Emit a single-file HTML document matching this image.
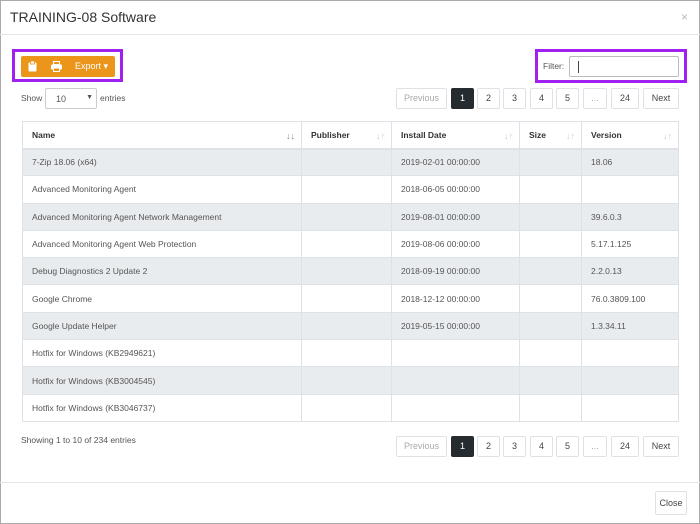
<!DOCTYPE html>
<html><head><style>
*{box-sizing:border-box;margin:0;padding:0}
body{width:700px;height:524px;background:#fff;font-family:"Liberation Sans",sans-serif;color:#555;position:relative;overflow:hidden}
.a{position:absolute}
.frame{left:0;top:0;width:700px;height:524px;border:1px solid #aaa}
.title{left:10px;top:9px;font-size:14px;color:#333}
.x{right:12px;top:10px;font-size:12px;color:#bbb}
.hr{left:0;width:700px;height:1px;background:#e5e5e5}
.pb{border:3px solid #a020f0}
.btn{left:21px;top:56px;width:94px;height:21px;background:#ec951b;border-radius:2px;color:#fff;font-size:9px}
.pg{height:21px;border:1px solid #dee2e6;border-radius:2px;font-size:9px;color:#444;text-align:center;line-height:19px;top:88px}
.pg.d{color:#aaa}
.pg.on{background:#262b30;color:#fff;border-color:#262b30}
table{position:absolute;left:22px;top:121px;width:657px;border-collapse:collapse;font-size:8.5px;color:#555;border:1px solid #dee2e6}
th{height:27px;text-align:left;font-weight:bold;color:#333;padding-left:9px;border-left:1px solid #dee2e6;border-bottom:2px solid #dee2e6;position:relative}
th span{position:absolute;right:6px;top:9px;color:#ccc;font-size:9px;font-weight:normal}
td{height:27.3px;padding-left:9px;border-left:1px solid #dee2e6;border-top:1px solid #dee2e6}
tr.s td{background:#e9ecef}
</style></head><body>
<div class="a frame"></div>
<div class="a title">TRAINING-08 Software</div>
<div class="a x">×</div>
<div class="a hr" style="top:34px"></div>
<div class="a pb" style="left:12px;top:49px;width:111px;height:33px"></div>
<div class="a btn">
<svg class="a" style="left:7px;top:5px" width="9" height="11"><rect x="0.5" y="1.5" width="8" height="9" rx="1" fill="#fff"/><rect x="2.5" y="0" width="4" height="3" fill="#fff" stroke="#ec951b" stroke-width=".8"/></svg>
<svg class="a" style="left:30px;top:5px" width="11" height="11"><rect x="2.5" y="0.5" width="6" height="3" fill="none" stroke="#fff"/><rect x="0" y="3.5" width="11" height="5" rx="1" fill="#fff"/><rect x="2.5" y="7" width="6" height="3.5" fill="#ec951b" stroke="#fff"/></svg>
<span class="a" style="left:54px;top:5px">Export ▾</span></div>
<div class="a pb" style="left:535px;top:49px;width:152px;height:34px"></div>
<div class="a" style="left:543px;top:61px;font-size:8.5px">Filter:</div>
<div class="a" style="left:569px;top:56px;width:110px;height:21px;border:1px solid #bbb;border-radius:2px"><div class="a" style="left:8px;top:4px;width:1px;height:12px;background:#444"></div></div>
<div class="a" style="left:21px;top:93px;font-size:8.5px">Show</div>
<div class="a" style="left:45px;top:88px;width:52px;height:21px;border:1px solid #ccc;border-radius:2px;font-size:9px;padding:5px 0 0 10px">10<span class="a" style="right:3px;top:5px;font-size:7px">▼</span></div>
<div class="a" style="left:100px;top:93px;font-size:8.5px">entries</div>
<div class="a pg d" style="left:396px;width:51px">Previous</div>
<div class="a pg on" style="left:451px;width:23px">1</div>
<div class="a pg" style="left:477px;width:23px">2</div>
<div class="a pg" style="left:503px;width:23px">3</div>
<div class="a pg" style="left:530px;width:23px">4</div>
<div class="a pg" style="left:556px;width:23px">5</div>
<div class="a pg d" style="left:583px;width:24px">...</div>
<div class="a pg" style="left:611px;width:28px">24</div>
<div class="a pg" style="left:643px;width:36px">Next</div>
<table>
<tr><th style="width:279px">Name<span style="color:#888">↓↓</span></th><th style="width:90px">Publisher<span>↓↑</span></th><th style="width:128px">Install Date<span>↓↑</span></th><th style="width:62px">Size<span>↓↑</span></th><th>Version<span>↓↑</span></th></tr>
<tr class="s"><td>7-Zip 18.06 (x64)</td><td></td><td>2019-02-01 00:00:00</td><td></td><td>18.06</td></tr>
<tr><td>Advanced Monitoring Agent</td><td></td><td>2018-06-05 00:00:00</td><td></td><td></td></tr>
<tr class="s"><td>Advanced Monitoring Agent Network Management</td><td></td><td>2019-08-01 00:00:00</td><td></td><td>39.6.0.3</td></tr>
<tr><td>Advanced Monitoring Agent Web Protection</td><td></td><td>2019-08-06 00:00:00</td><td></td><td>5.17.1.125</td></tr>
<tr class="s"><td>Debug Diagnostics 2 Update 2</td><td></td><td>2018-09-19 00:00:00</td><td></td><td>2.2.0.13</td></tr>
<tr><td>Google Chrome</td><td></td><td>2018-12-12 00:00:00</td><td></td><td>76.0.3809.100</td></tr>
<tr class="s"><td>Google Update Helper</td><td></td><td>2019-05-15 00:00:00</td><td></td><td>1.3.34.11</td></tr>
<tr><td>Hotfix for Windows (KB2949621)</td><td></td><td></td><td></td><td></td></tr>
<tr class="s"><td>Hotfix for Windows (KB3004545)</td><td></td><td></td><td></td><td></td></tr>
<tr><td>Hotfix for Windows (KB3046737)</td><td></td><td></td><td></td><td></td></tr>
</table>
<div class="a" style="left:21px;top:435px;font-size:8.5px">Showing 1 to 10 of 234 entries</div>
<div class="a pg d" style="left:396px;width:51px;top:436px">Previous</div>
<div class="a pg on" style="left:451px;width:23px;top:436px">1</div>
<div class="a pg" style="left:477px;width:23px;top:436px">2</div>
<div class="a pg" style="left:503px;width:23px;top:436px">3</div>
<div class="a pg" style="left:530px;width:23px;top:436px">4</div>
<div class="a pg" style="left:556px;width:23px;top:436px">5</div>
<div class="a pg d" style="left:583px;width:24px;top:436px">...</div>
<div class="a pg" style="left:611px;width:28px;top:436px">24</div>
<div class="a pg" style="left:643px;width:36px;top:436px">Next</div>
<div class="a hr" style="top:482px"></div>
<div class="a pg" style="left:655px;top:491px;width:32px;height:24px;line-height:22px">Close</div>
</body></html>
